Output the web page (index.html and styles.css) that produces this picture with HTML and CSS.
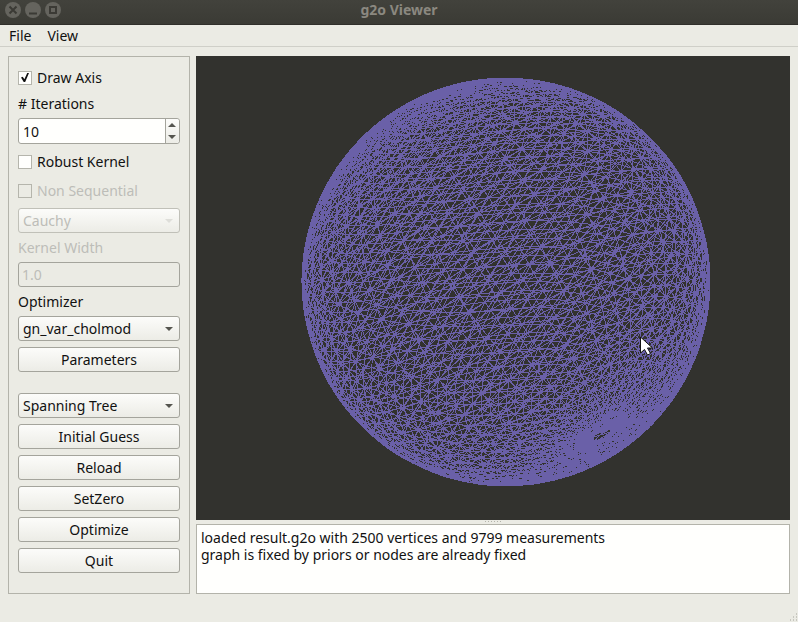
FILE: index.html
```html
<!DOCTYPE html>
<html lang="en">
<head>
    <meta charset="UTF-8">
    <meta name="viewport" content="width=device-width, initial-scale=1.0">
    <title>g2o Viewer</title>
    <link rel="stylesheet" href="styles.css">
</head>
<body>

    <header class="titlebar">
        <div class="window-buttons">
            <button class="window-btn" aria-label="Close">
                <svg viewBox="0 0 16 16"><path d="M4.5 4.5l7 7M11.5 4.5l-7 7"/></svg>
            </button>
            <button class="window-btn" aria-label="Minimize">
                <svg viewBox="0 0 16 16"><path d="M4 11.5h8"/></svg>
            </button>
            <button class="window-btn" aria-label="Maximize">
                <svg viewBox="0 0 16 16"><path d="M5 5h6v6h-6z"/></svg>
            </button>
        </div>
        <h1 class="title">g2o Viewer</h1>
    </header>

    <nav class="menubar">
        <a href="#">File</a>
        <a href="#">View</a>
    </nav>

    <main class="content">
        <form class="panel">
            <label class="check"><input type="checkbox" checked>Draw Axis</label>
            <label class="caption" for="iterations"># Iterations</label>
            <div class="spinbox">
                <input type="number" id="iterations" value="10">
                <div class="spin-buttons">
                    <button type="button" id="spin-up" class="spin-up" aria-label="Increase"></button>
                    <button type="button" id="spin-down" class="spin-down" aria-label="Decrease"></button>
                </div>
            </div>
            <label class="check"><input type="checkbox">Robust Kernel</label>
            <label class="check disabled"><input type="checkbox" disabled>Non Sequential</label>
            <div class="combo disabled">
                <select aria-label="Robust kernel" disabled><option>Cauchy</option></select>
            </div>
            <label class="caption disabled" for="kernel-width">Kernel Width</label>
            <input class="field" type="text" id="kernel-width" value="1.0" disabled>
            <label class="caption" for="optimizer">Optimizer</label>
            <div class="combo">
                <select id="optimizer"><option>gn_var_cholmod</option></select>
            </div>
            <button type="button" class="btn parameters">Parameters</button>
            <div class="combo">
                <select aria-label="Initial guess method"><option>Spanning Tree</option></select>
            </div>
            <button type="button" class="btn">Initial Guess</button>
            <button type="button" class="btn">Reload</button>
            <button type="button" class="btn">SetZero</button>
            <button type="button" class="btn">Optimize</button>
            <button type="button" class="btn">Quit</button>
        </form>

        <section class="workspace">
            <div class="viewer">
                <svg class="graph" viewBox="0 0 594 464" role="img" aria-label="Pose graph">
                    <path id="edges" class="edges"/>
                    <path class="pointer" d="M444.5 281v16l4-3.5 3 5.5 3-1.5-3-5.5h5z"/>
                </svg>
            </div>
            <div class="splitter"></div>
            <textarea class="log" aria-label="Log" readonly>loaded result.g2o with 2500 vertices and 9799 measurements
graph is fixed by priors or nodes are already fixed</textarea>
        </section>
    </main>

    <footer class="statusbar">
        <svg class="grip" viewBox="0 0 9 9"><path d="M7 1h1M4 4h1M7 4h1M1 7h1M4 7h1M7 7h1"/></svg>
    </footer>

    <script src="graph.js"></script>
</body>
</html>
```
FILE: styles.css
```css
* {
    box-sizing: border-box;
}
body {
    display: flex;
    flex-direction: column;
    min-height: 100vh;
    margin: 0;
    background: #ebebe4;
    color: #111;
    font-family: "Noto Sans", "Open Sans", sans-serif;
    font-size: 14px;
    line-height: 17px;
}
input, select, button, textarea {
    font: inherit;
    color: inherit;
    margin: 0;
}

/* Window frame */
.titlebar {
    display: grid;
    grid-template-columns: 1fr auto 1fr;
    align-items: center;
    height: 25px;
    padding: 0 5px 5px;
    background: linear-gradient(#42423c, #3b3b35);
    border-bottom: 1px solid #302f2b;
}
.window-buttons {
    display: flex;
    gap: 4px;
}
.window-btn {
    width: 16px;
    height: 16px;
    padding: 0;
    border: none;
    border-radius: 50%;
    background: #65645e;
}
.window-btn svg {
    display: block;
    fill: none;
    stroke: #3b3a35;
    stroke-width: 2;
}
.title {
    margin: 0;
    color: #8b8880;
    font-size: 14px;
    font-weight: bold;
}
.menubar {
    display: flex;
    gap: 16px;
    height: 22px;
    padding: 2px 9px;
    border-bottom: 1px solid #cfcfc8;
}
.menubar a {
    color: inherit;
    text-decoration: none;
}
.content {
    display: flex;
    flex: 1;
    gap: 6px;
    padding: 9px 8px 0;
}

/* Controls */
.panel {
    display: flex;
    flex-direction: column;
    gap: 6px;
    width: 182px;
    padding: 9px 9px 20px;
    border: 1px solid #b3b3aa;
}
.check {
    display: flex;
    align-items: center;
    gap: 5px;
    height: 23px;
}
.check input {
    display: grid;
    place-items: center;
    width: 14px;
    height: 14px;
    appearance: none;
    background: #fffffd;
    border: 1px solid #b5b5ac;
}
.check input:checked::before {
    content: "";
    width: 8px;
    height: 9px;
    background: #111;
    clip-path: polygon(0 50%, 22% 42%, 42% 70%, 78% 0, 100% 0, 52% 100%, 34% 100%);
}
.check input:disabled {
    background: transparent;
}
.disabled {
    color: #bdbdb8;
}
.spinbox {
    display: flex;
    height: 26px;
    background: #fffffd;
    border: 1px solid #a4a49c;
    border-radius: 3px;
}
.spinbox input {
    flex: 1;
    min-width: 0;
    padding: 0 4px;
    border: none;
    background: none;
    appearance: textfield;
}
.spinbox input::-webkit-inner-spin-button {
    display: none;
}
.spin-buttons {
    display: grid;
    width: 14px;
    border-left: 1px solid #a4a49c;
    background: linear-gradient(#fcfcfa, #ecece6);
    border-radius: 0 3px 3px 0;
}
.spin-buttons button {
    display: grid;
    place-items: center;
    padding: 0 1px 0 0;
    border: none;
    background: none;
}
.spin-up::before,
.spin-down::before,
.combo::after {
    content: "";
    border: 4px solid transparent;
}
.spin-up::before {
    border-top: none;
    border-bottom-color: #55554f;
}
.spin-down::before {
    border-bottom: none;
    border-top-color: #55554f;
}
.combo {
    display: grid;
    align-items: center;
}
.combo select,
.combo::after {
    grid-area: 1 / 1;
}
.combo::after {
    justify-self: end;
    margin-right: 7px;
    border-bottom: none;
    border-top-color: #55554f;
    pointer-events: none;
}
.combo.disabled::after {
    border-top-color: #deded9;
}
.combo select,
.btn,
.field {
    width: 100%;
    height: 25px;
    padding: 0 4px;
    border: 1px solid #a4a49c;
    border-radius: 3px;
    background: linear-gradient(#fcfcfa, #ecece6);
}
.combo select {
    appearance: none;
    opacity: 1;
    line-height: 21px;
}
.combo select:disabled {
    border-color: #c0c0b8;
}
.field:disabled {
    padding: 0 3px;
    background: #ebebe4;
    color: #bdbdb8;
}
.parameters {
    margin-bottom: 15px;
}

/* Graph view and log */
.workspace {
    display: flex;
    flex: 1;
    flex-direction: column;
    min-width: 0;
}
.viewer {
    display: flex;
    flex: 1;
    background: #32322e;
}
.graph {
    width: 100%;
}
.edges {
    fill: none;
    stroke: #6a60a8;
    shape-rendering: crispEdges;
}
.pointer {
    fill: #fff;
    stroke: #111;
}
.splitter {
    align-self: center;
    width: 17px;
    height: 4px;
    background: repeating-linear-gradient(90deg, #b3b3aa 0 1px, transparent 1px 3px) 0 1px / 100% 1px no-repeat;
}
.log {
    height: 70px;
    padding: 4px;
    border: 1px solid #b3b3aa;
    background: #fffffd;
    resize: none;
}
.statusbar {
    display: flex;
    align-items: flex-end;
    justify-content: flex-end;
    height: 28px;
}
.grip {
    width: 9px;
    height: 9px;
    stroke: #a4a49c;
}
```
FILE: graph.js
```js
// Poses on a spiral around the sphere, 50 laps with 50 poses each
const laps = 50;
const perLap = 50;
const center = { x: 310, y: 226 };
const radius = 204;

// camera distance in sphere radii, focal length keeps the outline at radius
const distance = 4;
const focal = Math.sqrt(distance * distance - 1);

// view basis: z points at the camera, axis runs through the far pole
const axis = [0.505, 0.824, -0.257];
const side = [0.853, -0.522, 0];
const up = [
    axis[1] * side[2] - axis[2] * side[1],
    axis[2] * side[0] - axis[0] * side[2],
    axis[0] * side[1] - axis[1] * side[0]
];

function project(i) {
    const polar = Math.PI * (i + 8) / (laps * perLap + 16);
    const turn = 2 * Math.PI * i / perLap;
    const a = Math.cos(polar);
    const s = Math.sin(polar) * Math.cos(turn);
    const u = Math.sin(polar) * Math.sin(turn);
    const p = [0, 1, 2].map(k => a * axis[k] + s * side[k] + u * up[k]);
    const scale = radius * focal / (distance - p[2]);
    const x = center.x + scale * p[0];
    const y = center.y + scale * p[1];
    return x.toFixed(1) + ' ' + y.toFixed(1);
}

const points = [];
for (let i = 0; i < laps * perLap; i++) {
    points.push(project(i));
}

let d = '';
for (let i = 0; i < points.length; i++) {
    [1, perLap - 1, perLap, perLap + 1].forEach(step => {
        if (i + step < points.length) {
            d += 'M' + points[i] + 'L' + points[i + step];
        }
    });
}
document.getElementById('edges').setAttribute('d', d);

const iterations = document.getElementById('iterations');
document.getElementById('spin-up').addEventListener('click', () => iterations.stepUp());
document.getElementById('spin-down').addEventListener('click', () => iterations.stepDown());
```
